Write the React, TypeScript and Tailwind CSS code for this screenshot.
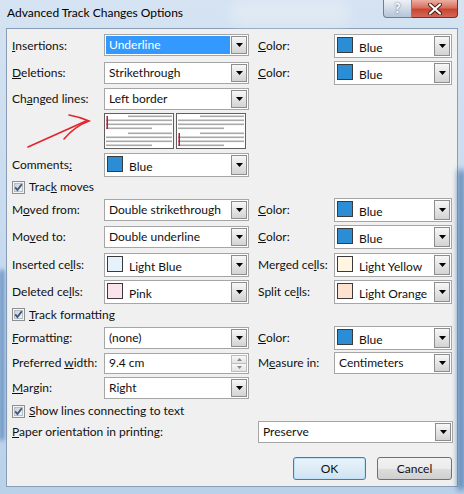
import React from "react";

function Arrow() {
  return (
    <div className="my-px mr-px flex w-[16px] items-center justify-center border border-[#8d8d8d] bg-gradient-to-b from-[#f7f7f7] to-[#d3d3d3]">
      <svg width="7" height="4" viewBox="0 0 7 4">
        <path d="M0 0h7L3.5 4z" fill="#000" />
      </svg>
    </div>
  );
}

function Combo({ w, h = "h-[22px]", children }: { w: string; h?: string; children: React.ReactNode }) {
  return (
    <div className={`${w} ${h} flex border border-[#a6a6a6] bg-white`}>
      <div className="flex min-w-0 flex-1 items-center">{children}</div>
      <Arrow />
    </div>
  );
}

function Text({ children }: { children: React.ReactNode }) {
  return <span className="pl-[4px] whitespace-nowrap">{children}</span>;
}

function Swatch({ color, name }: { color: string; name: string }) {
  return (
    <>
      <div className={`ml-[2px] h-[16px] w-[16px] shrink-0 self-start mt-[2px] border border-[#3a3a3a] ${color}`} />
      <span className="ml-[6px] mt-[4px] whitespace-nowrap">{name}</span>
    </>
  );
}

function ColorCombo({ w = "w-[118px]", color, name }: { w?: string; color: string; name: string }) {
  return (
    <Combo w={w} h="h-[24px]">
      <Swatch color={color} name={name} />
    </Combo>
  );
}

function Check({ children }: { children: React.ReactNode }) {
  return (
    <div className="flex items-center">
      <svg width="13" height="13" viewBox="0 0 13 13">
        <defs>
          <linearGradient id="cb" x1="0" y1="0" x2="1" y2="1">
            <stop offset="0" stopColor="#cbcfd5" />
            <stop offset="1" stopColor="#f6f6f6" />
          </linearGradient>
        </defs>
        <rect x="0.5" y="0.5" width="12" height="12" fill="#f4f4f4" stroke="#8e8f8f" />
        <rect x="2.5" y="2.5" width="8" height="8" fill="url(#cb)" stroke="#b8bcc3" />
        <path d="M3.2 6.4 L5.4 9 L9.8 3.2" stroke="#3b5783" strokeWidth="1.9" fill="none" />
      </svg>
      <span className="ml-[4px] whitespace-nowrap">{children}</span>
    </div>
  );
}

function Preview() {
  const lines: [number, number, number][] = [
    [24, 3, 68],
    [2, 7, 68],
    [2, 11, 68],
    [2, 15, 48],
    [24, 20, 68],
    [2, 24, 68],
    [2, 28, 68],
    [2, 32, 48],
  ];
  return (
    <svg width="144" height="36" viewBox="0 0 144 36">
      {[0, 72].map((ox, b) => (
        <g key={ox} transform={`translate(${ox} 0)`}>
          <rect x="0.5" y="0.5" width="69" height="35" fill="#fff" stroke="#5f5f5f" />
          {lines.map(([a, y, c]) => (
            <rect key={y} x={a} y={y - 0.5} width={c - a} height="1.6" fill="#a9a9a9" />
          ))}
          <rect x="2.5" y={b === 0 ? 3 : 20} width="1.5" height="13" fill="#c3123c" />
        </g>
      ))}
    </svg>
  );
}

function Spin() {
  return (
    <div className="flex h-[21px] w-[145px] border border-[#a6a6a6] bg-white">
      <div className="flex flex-1 items-center">
        <Text>9.4 cm</Text>
      </div>
      <div className="my-px mr-px flex w-[16px] flex-col">
        <div className="flex flex-1 items-center justify-center border border-[#bdbdbd] bg-gradient-to-b from-[#f8f8f8] to-[#e2e2e2]">
          <svg width="5" height="3" viewBox="0 0 5 3">
            <path d="M0 3h5L2.5 0z" fill="#7d8a98" />
          </svg>
        </div>
        <div className="flex flex-1 items-center justify-center border border-t-0 border-[#bdbdbd] bg-gradient-to-b from-[#f8f8f8] to-[#e2e2e2]">
          <svg width="5" height="3" viewBox="0 0 5 3">
            <path d="M0 0h5L2.5 3z" fill="#7d8a98" />
          </svg>
        </div>
      </div>
    </div>
  );
}

function L({ children, w = "w-[92px]" }: { children: React.ReactNode; w?: string }) {
  return <div className={`${w} shrink-0 whitespace-nowrap`}>{children}</div>;
}

function R({ children }: { children: React.ReactNode }) {
  return <div className="ml-[9px] w-[76px] shrink-0 whitespace-nowrap">{children}</div>;
}

function TitleButtons() {
  return (
    <div className="absolute left-[383px] top-0 flex h-[18px]">
      <div className="flex w-[29px] items-center justify-center rounded-bl-[4px] border border-t-0 border-[#6f7f95] bg-gradient-to-b from-[#eef2f7] to-[#b5c4d7] text-[13px] font-bold text-white [text-shadow:0_0_2px_#3b4a5e]">
        ?
      </div>
      <div className="flex w-[46px] items-center justify-center rounded-br-[4px] border border-l-0 border-t-0 border-[#7b2d22] bg-[linear-gradient(180deg,#eab0a3_0%,#d8705f_45%,#c7452f_55%,#d5685a_100%)]">
        <svg width="14" height="12" viewBox="0 0 14 12">
          <path d="M2 1.5 L12 10.5 M12 1.5 L2 10.5" stroke="#4a1810" strokeWidth="4" strokeLinecap="round" />
          <path d="M2 1.5 L12 10.5 M12 1.5 L2 10.5" stroke="#fff" strokeWidth="2.2" strokeLinecap="round" />
        </svg>
      </div>
    </div>
  );
}

export default function App() {
  return (
    <div className="relative h-[494px] w-[464px] overflow-hidden bg-[linear-gradient(180deg,#d5e3f2,#c4d8ee_60%,#bad1ea)] font-['Lato',sans-serif] text-[12px] text-[#111]">
      <div className="absolute left-0 top-[270px] h-[170px] w-[4px] bg-[#5584b8] blur-[2px]" />
      <div className="absolute right-0 top-[170px] h-[320px] w-[6px] bg-[#4a78ab] blur-[3px]" />
      <div className="absolute left-[230px] top-0 h-[26px] w-[120px] rounded-full bg-[#e7eef6] opacity-60 blur-[6px]" />
      <div className="flex h-[28px] items-center pb-[3px] pl-[7px] text-black">Advanced Track Changes Options</div>
      <TitleButtons />
      <div className="ml-[6px] flex h-[459px] w-[452px] flex-col border border-[#8a9db6] bg-[#f0f0f0] pl-[5px] pr-[4px]">
        <div className="mt-[5px] flex h-[24px] items-center">
          <L>
            <u>I</u>nsertions:
          </L>
          <div className="flex h-[22px] w-[145px] self-start border border-[#a6a6a6] bg-white">
            <div className="m-px flex flex-1 items-center bg-[#3399ff] pl-[3px] text-white">Underline</div>
            <Arrow />
          </div>
          <R>
            <u>C</u>olor:
          </R>
          <ColorCombo color="bg-[#2b8dd4]" name="Blue" />
        </div>
        <div className="mt-[3px] flex h-[24px] items-center">
          <L>
            <u>D</u>eletions:
          </L>
          <Combo w="w-[145px]">
            <Text>Strikethrough</Text>
          </Combo>
          <R>
            <u>C</u>olor:
          </R>
          <ColorCombo color="bg-[#2b8dd4]" name="Blue" />
        </div>
        <div className="mt-[3px] flex h-[22px] items-center">
          <L>
            Ch<u>a</u>nged lines:
          </L>
          <Combo w="w-[145px]">
            <Text>Left border</Text>
          </Combo>
        </div>
        <div className="mt-[3px] flex h-[36px]">
          <div className="w-[92px]" />
          <Preview />
        </div>
        <div className="mt-[4px] flex h-[24px] items-center">
          <L>
            Comments<u>:</u>
          </L>
          <ColorCombo w="w-[145px]" color="bg-[#2b8dd4]" name="Blue" />
        </div>
        <div className="mt-[3px] flex h-[14px] items-center">
          <Check>
            Trac<u>k</u> moves
          </Check>
        </div>
        <div className="mt-[3px] flex h-[26px] items-center">
          <L>
            M<u>o</u>ved from:
          </L>
          <Combo w="w-[145px]">
            <Text>Double strikethrough</Text>
          </Combo>
          <R>
            <u>C</u>olor:
          </R>
          <ColorCombo color="bg-[#2b8dd4]" name="Blue" />
        </div>
        <div className="mt-px flex h-[26px] items-center">
          <L>
            Mo<u>v</u>ed to:
          </L>
          <Combo w="w-[145px]">
            <Text>Double underline</Text>
          </Combo>
          <R>
            <u>C</u>olor:
          </R>
          <ColorCombo color="bg-[#2b8dd4]" name="Blue" />
        </div>
        <div className="mt-px flex h-[27px] items-center">
          <L>
            Inserted ce<u>l</u>ls:
          </L>
          <ColorCombo w="w-[145px]" color="bg-[#e6f2fb]" name="Light Blue" />
          <R>
            Merged ce<u>l</u>ls:
          </R>
          <ColorCombo color="bg-[#fff5e1]" name="Light Yellow" />
        </div>
        <div className="flex h-[27px] items-center">
          <L>
            Deleted ce<u>l</u>ls:
          </L>
          <ColorCombo w="w-[145px]" color="bg-[#fbe3ee]" name="Pink" />
          <R>
            Split ce<u>l</u>ls:
          </R>
          <ColorCombo color="bg-[#fde3cf]" name="Light Orange" />
        </div>
        <div className="mt-[2px] flex h-[15px] items-center">
          <Check>
            <u>T</u>rack formatting
          </Check>
        </div>
        <div className="mt-[4px] flex h-[24px] items-center">
          <L>
            <u>F</u>ormatting:
          </L>
          <Combo w="w-[145px]">
            <Text>(none)</Text>
          </Combo>
          <R>
            <u>C</u>olor:
          </R>
          <ColorCombo color="bg-[#2b8dd4]" name="Blue" />
        </div>
        <div className="mt-[2px] flex h-[22px] items-center">
          <L>
            Preferred <u>w</u>idth:
          </L>
          <Spin />
          <R>
            M<u>e</u>asure in:
          </R>
          <Combo w="w-[118px]">
            <Text>Centimeters</Text>
          </Combo>
        </div>
        <div className="mt-[3px] flex h-[22px] items-center">
          <L>
            <u>M</u>argin:
          </L>
          <Combo w="w-[145px]">
            <Text>Right</Text>
          </Combo>
        </div>
        <div className="mt-[5px] flex h-[14px] items-center">
          <Check>
            <u>S</u>how lines connecting to text
          </Check>
        </div>
        <div className="mt-[3px] flex h-[22px] items-center">
          <div className="flex-1 whitespace-nowrap">
            <u>P</u>aper orientation in printing:
          </div>
          <Combo w="w-[195px]">
            <Text>Preserve</Text>
          </Combo>
        </div>
        <div className="mt-[14px] flex h-[23px] justify-end gap-[11px] pr-px">
          <div className="flex w-[73px] items-center justify-center rounded-[3px] border border-[#3c7fb1] bg-gradient-to-b from-[#eaf4fb] to-[#cfe3f1] shadow-[inset_0_0_0_1px_#bfe0f5]">
            OK
          </div>
          <div className="flex w-[75px] items-center justify-center rounded-[3px] border border-[#707070] bg-[linear-gradient(180deg,#f2f2f2_0%,#ebebeb_50%,#dddddd_51%,#cfcfcf_100%)]">
            Cancel
          </div>
        </div>
      </div>
      <svg className="absolute left-0 top-0" width="100" height="160" viewBox="0 0 100 160">
        <path d="M28 147 L86 121" stroke="#e3232b" strokeWidth="1.6" fill="none" strokeLinecap="round" />
        <path d="M69 115 Q80 117 89 121 Q75 126 64 139" stroke="#e3232b" strokeWidth="1.6" fill="none" strokeLinecap="round" />
      </svg>
    </div>
  );
}
